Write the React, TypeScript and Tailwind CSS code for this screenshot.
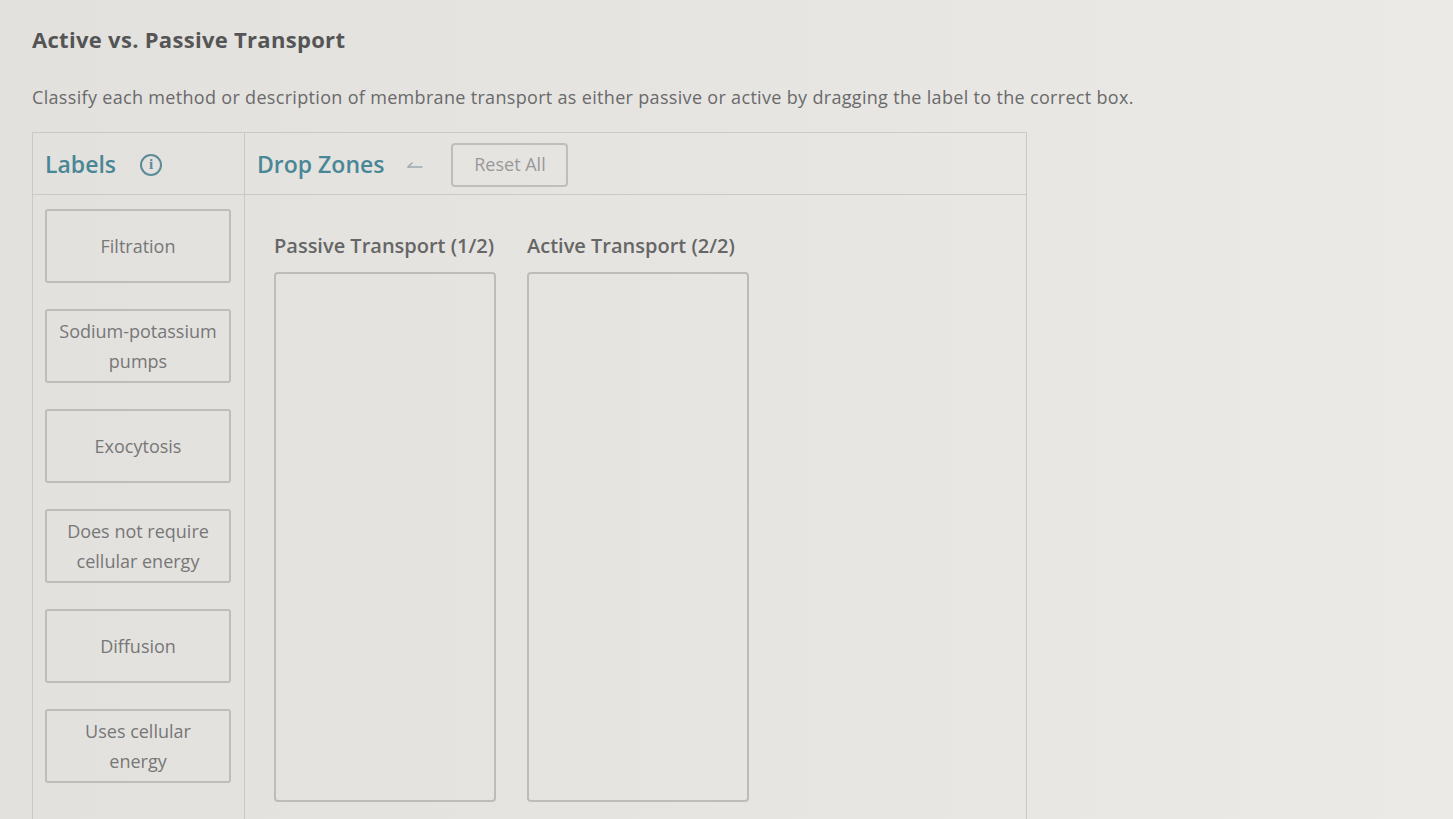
const labels: string[][] = [
  ['Filtration'],
  ['Sodium-potassium', 'pumps'],
  ['Exocytosis'],
  ['Does not require', 'cellular energy'],
  ['Diffusion'],
  ['Uses cellular', 'energy'],
]

const zones = ['Passive Transport (1/2)', 'Active Transport (2/2)']

function InfoIcon() {
  return (
    <span className="flex h-[22px] w-[22px] items-center justify-center rounded-full border-2 border-[#5d8c98] text-[15px] font-bold leading-none text-[#5d8c98]" style={{ fontFamily: '"Liberation Serif", serif' }}>
      i
    </span>
  )
}

export default function App() {
  return (
    <div
      className="h-[819px] w-[1453px] overflow-hidden bg-gradient-to-r from-[#e2e1de] via-[#e6e5e2] to-[#ebeae7] text-[#5f5f5f]"
      style={{ fontFamily: '"Open Sans", Lato, sans-serif' }}
    >
      <div className="pl-8 pt-[25px]">
        <h1 className="text-[22px] font-bold leading-7 tracking-[0.3px] text-[#555]">Active vs. Passive Transport</h1>
        <p className="mt-[32px] text-[18px] leading-6 tracking-[0.32px] text-[#6a6a6a]">
          Classify each method or description of membrane transport as either passive or active by dragging the label to the correct box.
        </p>

        <div className="mt-[23px] flex w-[995px] border border-[#c9c9c7]">
          {/* labels column */}
          <div className="w-[212px] shrink-0 border-r border-[#c9c9c7]">
            <div className="flex h-[62px] items-center gap-[24px] border-b border-[#c9c9c7] pl-3 pt-[2px]">
              <span className="text-[23px] font-semibold text-[#4a8796]">Labels</span>
              <InfoIcon />
            </div>
            <div className="flex flex-col gap-[26px] pb-10 pl-3 pt-[14px]">
              {labels.map((lines, i) => (
                <div
                  key={i}
                  className="flex h-[74px] w-[186px] flex-col items-center justify-center rounded-[3px] border-2 border-[#bdbdbb] text-[18px] leading-[30px] text-[#777]"
                >
                  {lines.map(l => (
                    <span key={l}>{l}</span>
                  ))}
                </div>
              ))}
            </div>
          </div>

          {/* drop zones column */}
          <div className="flex-1">
            <div className="flex h-[62px] items-center border-b border-[#c9c9c7] pl-3 pt-[2px]">
              <span className="text-[23px] font-semibold text-[#4a8796]">Drop Zones</span>
              <svg className="ml-[22px] h-[14px] w-[18px] text-[#9aa9ad]" viewBox="0 0 18 14" fill="none" stroke="currentColor" strokeWidth="1.4" strokeLinecap="round" strokeLinejoin="round">
                <path d="M2 9h14" />
                <path d="M2 9l4-4" />
              </svg>
              <button className="ml-[27px] h-[44px] w-[117px] rounded-[4px] border-2 border-[#bebebc] text-[18px] text-[#999]">
                Reset All
              </button>
            </div>
            <div className="flex gap-[31px] pl-[29px] pt-[39px]">
              {zones.map(z => (
                <div key={z} className="flex w-[222px] flex-col">
                  <span className="whitespace-nowrap text-[20px] font-semibold leading-6 text-[#666]">{z}</span>
                  <div className="mt-[14px] h-[530px] rounded-[4px] border-2 border-[#bcbcba]" />
                </div>
              ))}
            </div>
          </div>
        </div>
      </div>
    </div>
  )
}
